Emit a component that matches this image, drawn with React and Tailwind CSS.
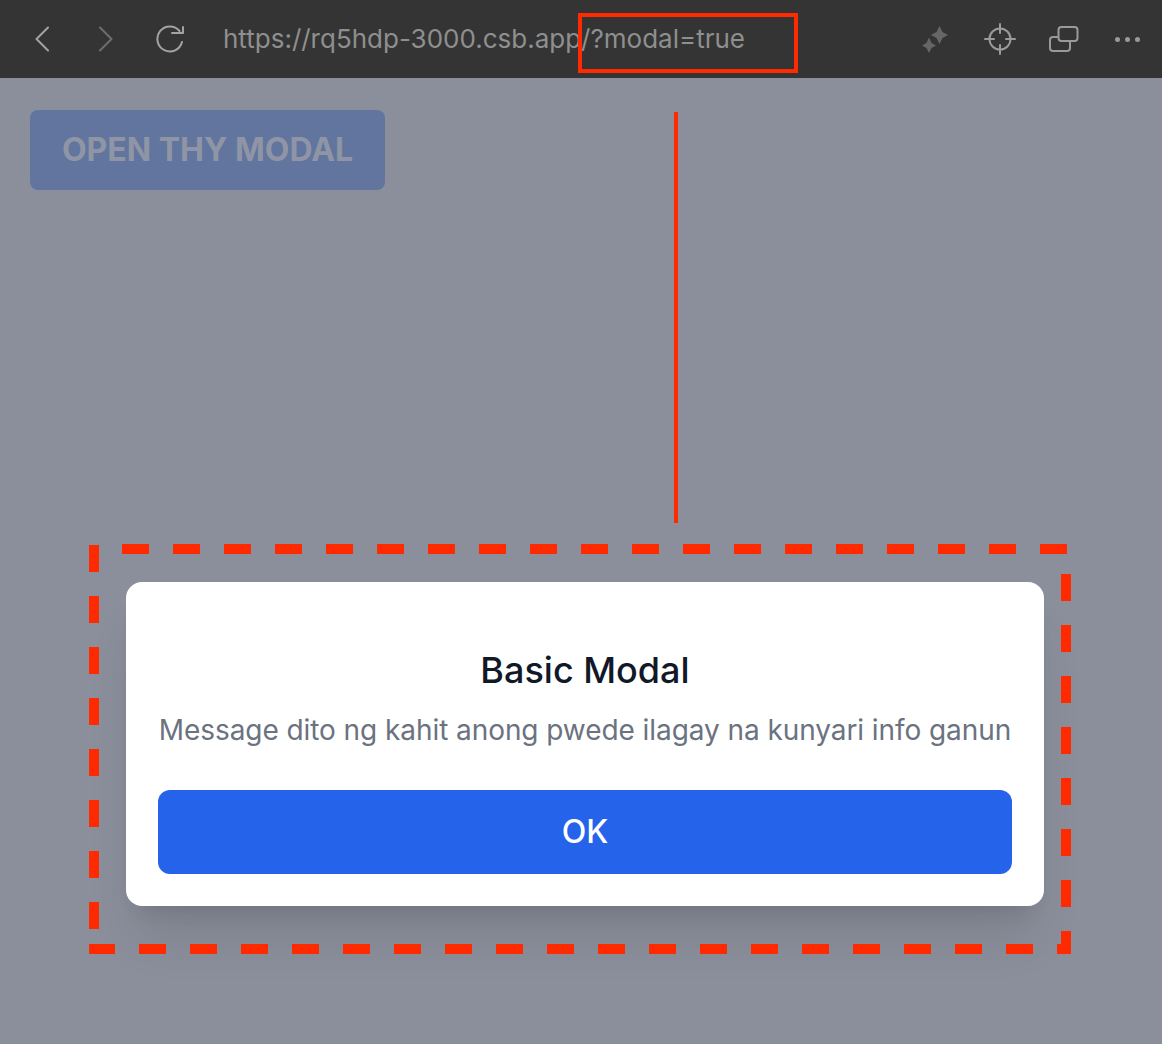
const RED = '#ff2a00';

function BrowserBar() {
  return (
    <header className="flex h-[78px] items-center bg-[#343434] pl-[35px] font-['Inter',sans-serif]">
      <svg width="14" height="26" viewBox="0 0 14 26" fill="none" stroke="#a3a3a3" strokeWidth="2" strokeLinecap="round" strokeLinejoin="round">
        <path d="M13 1.5 1.5 13 13 24.5" />
      </svg>
      <svg className="ml-[50px]" width="14" height="26" viewBox="0 0 14 26" fill="none" stroke="#6e6e6e" strokeWidth="2" strokeLinecap="round" strokeLinejoin="round">
        <path d="M1 1.5 12.5 13 1 24.5" />
      </svg>
      <svg className="ml-[43px]" width="28" height="28" viewBox="0 0 28 28" fill="none" stroke="#a3a3a3" strokeWidth="2" strokeLinecap="round" strokeLinejoin="round">
        <path d="M26 17A12.500 12.500 0 1 1 23.500 6" />
        <path d="M27 2V8H16" />
      </svg>
      <span className="ml-[39px] text-[26px] leading-none text-[#8f8f8f]">https://rq5hdp-3000.csb.app/?modal=true</span>
      <div className="ml-auto flex items-center pr-[22px]">
        <svg width="28" height="28" viewBox="0 0 28 28" fill="#666666">
          <path d="M18.5 1 21.5 7 27 10l-5.500 3-3 6-3-6L10 10l5.500-3z" />
          <path d="M8 12.500 10.500 18 15 20.500 10.500 23 8 28 5.500 23 1 20.500 5.500 18z" />
        </svg>
        <svg className="ml-[35px]" width="32" height="32" viewBox="0 0 32 32" fill="none" stroke="#9a9a9a" strokeWidth="2" strokeLinecap="round">
          <circle cx="16" cy="16" r="10.500" />
          <path d="M16 1v9M16 22v9M1 16h9M22 16h9" />
        </svg>
        <svg className="ml-[33px]" width="30" height="26" viewBox="0 0 30 26" fill="none" stroke="#9a9a9a" strokeWidth="2" strokeLinejoin="round">
          <rect x="9.500" y="1" width="19" height="14" rx="3" />
          <path d="M9.500 11H4a3 3 0 0 0-3 3v8a3 3 0 0 0 3 3h14a3 3 0 0 0 3-3v-7" />
        </svg>
        <div className="ml-[36px] flex gap-[5px]">
          <span className="h-[5px] w-[5px] rounded-full bg-[#9a9a9a]" />
          <span className="h-[5px] w-[5px] rounded-full bg-[#9a9a9a]" />
          <span className="h-[5px] w-[5px] rounded-full bg-[#9a9a9a]" />
        </div>
      </div>
    </header>
  );
}

// red markup drawn over the screenshot
function Annotations() {
  return (
    <svg className="pointer-events-none absolute left-0 top-0" width="1162" height="1044" fill="none" stroke={RED}>
      <rect x="580" y="15" width="216" height="56" strokeWidth="4" />
      <path d="M676 112V523" strokeWidth="4" />
      <g strokeWidth="10" strokeDasharray="27 24">
        <path d="M122 549H1067" />
        <path d="M1066 574V954" />
        <path d="M89 949H1071" strokeDashoffset="1" />
        <path d="M94 545V929" />
      </g>
    </svg>
  );
}

export default function App() {
  return (
    <div className="relative h-[1044px] w-[1162px] overflow-hidden bg-[#8b8f9b] font-['Inter',sans-serif]">
      <BrowserBar />
      <div className="px-[30px] pt-[32px]">
        <button className="h-[80px] w-[355px] rounded-lg bg-[#61759f] text-[32px] font-bold text-[#8f95a5]">OPEN THY MODAL</button>
      </div>
      <div className="absolute left-[126px] top-[582px] flex h-[324px] w-[918px] flex-col items-center rounded-2xl bg-white p-[32px] shadow-[0_40px_50px_-10px_rgb(0_0_0/0.1),0_16px_20px_-12px_rgb(0_0_0/0.1)]">
        <h2 className="mt-[34px] text-[36px] font-medium leading-[44px] text-[#111827]">Basic Modal</h2>
        <p className="mt-[18px] whitespace-nowrap text-[28px] leading-[40px] tracking-[-0.07px] text-[#6b7280]">Message dito ng kahit anong pwede ilagay na kunyari info ganun</p>
        <button className="mt-auto h-[84px] w-full rounded-xl bg-[#2563eb] text-[32px] font-medium text-white">OK</button>
      </div>
      <Annotations />
    </div>
  );
}
